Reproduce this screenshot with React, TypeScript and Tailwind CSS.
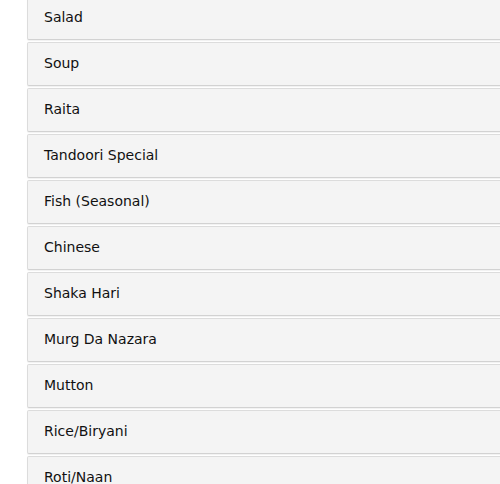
const items = [
  'Salad',
  'Soup',
  'Raita',
  'Tandoori Special',
  'Fish (Seasonal)',
  'Chinese',
  'Shaka Hari',
  'Murg Da Nazara',
  'Mutton',
  'Rice/Biryani',
  'Roti/Naan',
];

export default function App() {
  return (
    <div className="h-[484px] w-[500px] overflow-hidden bg-white font-['DejaVu_Sans',Verdana,sans-serif]">
      <div className="-mt-[4px] mr-[-12px] flex flex-col gap-[2px] pl-[27px]">
        {items.map((item) => (
          <div
            key={item}
            className="flex h-[44px] items-center rounded-[2px] border border-[#dcdcdc] border-b-[#d2d2d2] bg-[#f4f4f4] pb-[2px] pl-[16px] text-[14px] text-[#111] shadow-[0_1px_1px_rgba(0,0,0,0.06)]"
          >
            {item}
          </div>
        ))}
      </div>
    </div>
  );
}
